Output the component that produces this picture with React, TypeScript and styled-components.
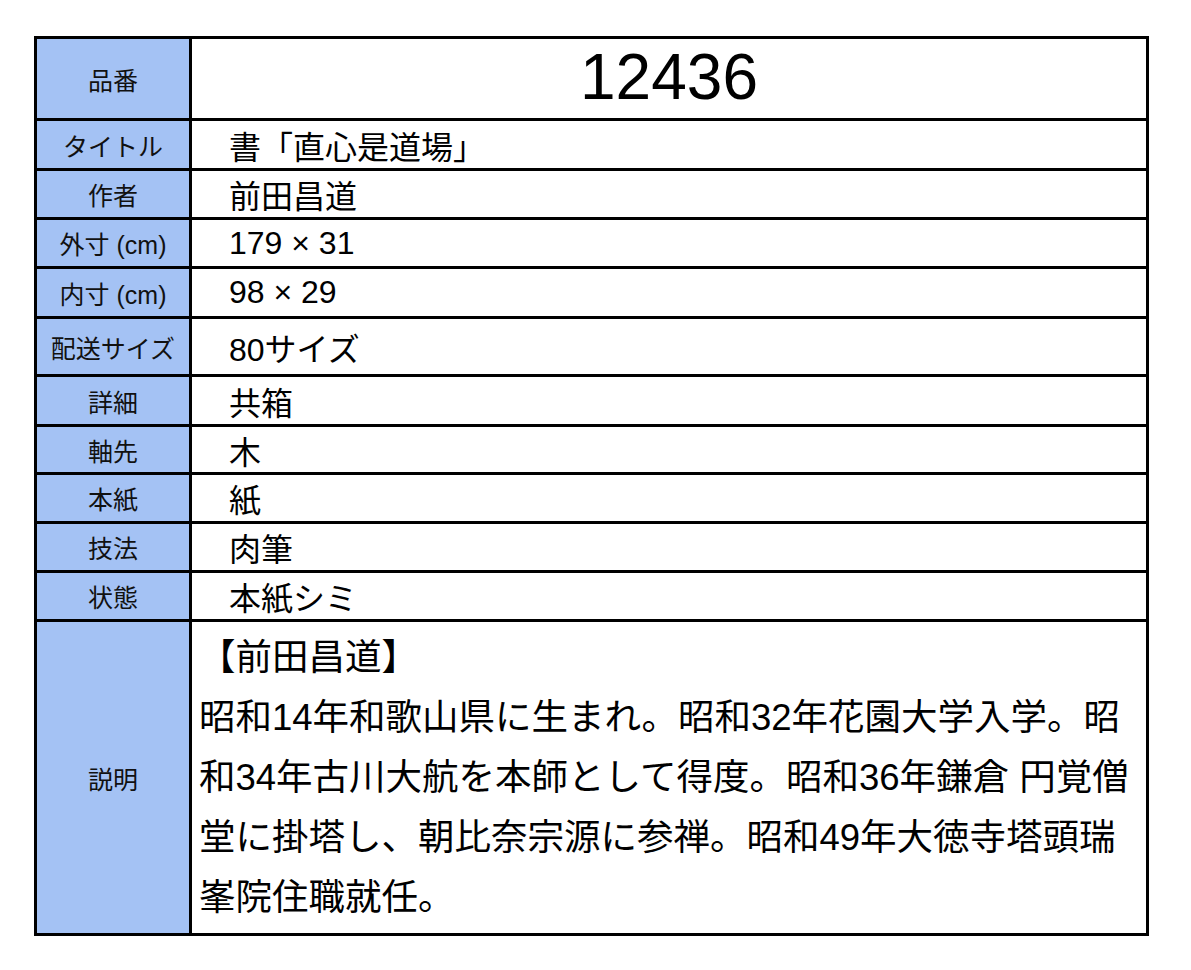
import React from "react";
import styled, { createGlobalStyle } from "styled-components";

const GlobalStyle = createGlobalStyle`
  html, body {
    margin: 0;
    padding: 0;
    background: #ffffff;
  }
  body {
    font-family: "Liberation Sans", "Noto Sans CJK JP", sans-serif;
    color: #000;
  }
`;

const Page = styled.div`
  padding: 36px 0 0 34px;
`;

const Table = styled.div<{ $rows: string }>`
  display: grid;
  grid-template-columns: 152px 954px;
  grid-template-rows: ${(p) => p.$rows};
  gap: 3px;
  padding: 3px;
  background: #000;
  width: fit-content;
`;

const Label = styled.div`
  background: #a4c2f4;
  display: flex;
  align-items: center;
  justify-content: center;
  font-size: 25px;
  color: #111;
  white-space: nowrap;
`;

const Value = styled.div<{ $center?: boolean }>`
  background: #fff;
  display: flex;
  align-items: center;
  justify-content: ${(p) => (p.$center ? "center" : "flex-start")};
  padding-left: ${(p) => (p.$center ? "0" : "37px")};
  font-size: 32px;
  white-space: nowrap;
`;

const Number = styled.span`
  font-size: 64px;
  line-height: 1;
  padding-bottom: 4px;
`;

const Description = styled.div`
  background: #fff;
  display: flex;
  align-items: center;
  padding: 0 7px;
`;

const DescText = styled.p`
  margin: 0;
  font-size: 36.5px;
  line-height: 60px;
  white-space: nowrap;
`;

const rows: { label: string; value: string; h: number }[] = [
  { label: "タイトル", value: "書「直心是道場」", h: 47 },
  { label: "作者", value: "前田昌道", h: 46 },
  { label: "外寸 (cm)", value: "179 × 31", h: 46 },
  { label: "内寸 (cm)", value: "98 × 29", h: 47 },
  { label: "配送サイズ", value: "80サイズ", h: 55 },
  { label: "詳細", value: "共箱", h: 47 },
  { label: "軸先", value: "木", h: 45 },
  { label: "本紙", value: "紙", h: 46 },
  { label: "技法", value: "肉筆", h: 46 },
  { label: "状態", value: "本紙シミ", h: 46 },
];

const lines = [
  "【前田昌道】",
  "昭和14年和歌山県に生まれ。昭和32年花園大学入学。昭",
  "和34年古川大航を本師として得度。昭和36年鎌倉 円覚僧",
  "堂に掛塔し、朝比奈宗源に参禅。昭和49年大徳寺塔頭瑞",
  "峯院住職就任。",
];

export default function App() {
  const template = [79, ...rows.map((r) => r.h), 311].map((h) => `${h}px`).join(" ");
  return (
    <>
      <GlobalStyle />
      <Page>
        <Table $rows={template}>
          <Label>品番</Label>
          <Value $center>
            <Number>12436</Number>
          </Value>
          {rows.map((r) => (
            <React.Fragment key={r.label}>
              <Label>{r.label}</Label>
              <Value>{r.value}</Value>
            </React.Fragment>
          ))}
          <Label>説明</Label>
          <Description>
            <DescText>
              {lines.map((l, i) => (
                <React.Fragment key={i}>
                  {l}
                  {i < lines.length - 1 && <br />}
                </React.Fragment>
              ))}
            </DescText>
          </Description>
        </Table>
      </Page>
    </>
  );
}
